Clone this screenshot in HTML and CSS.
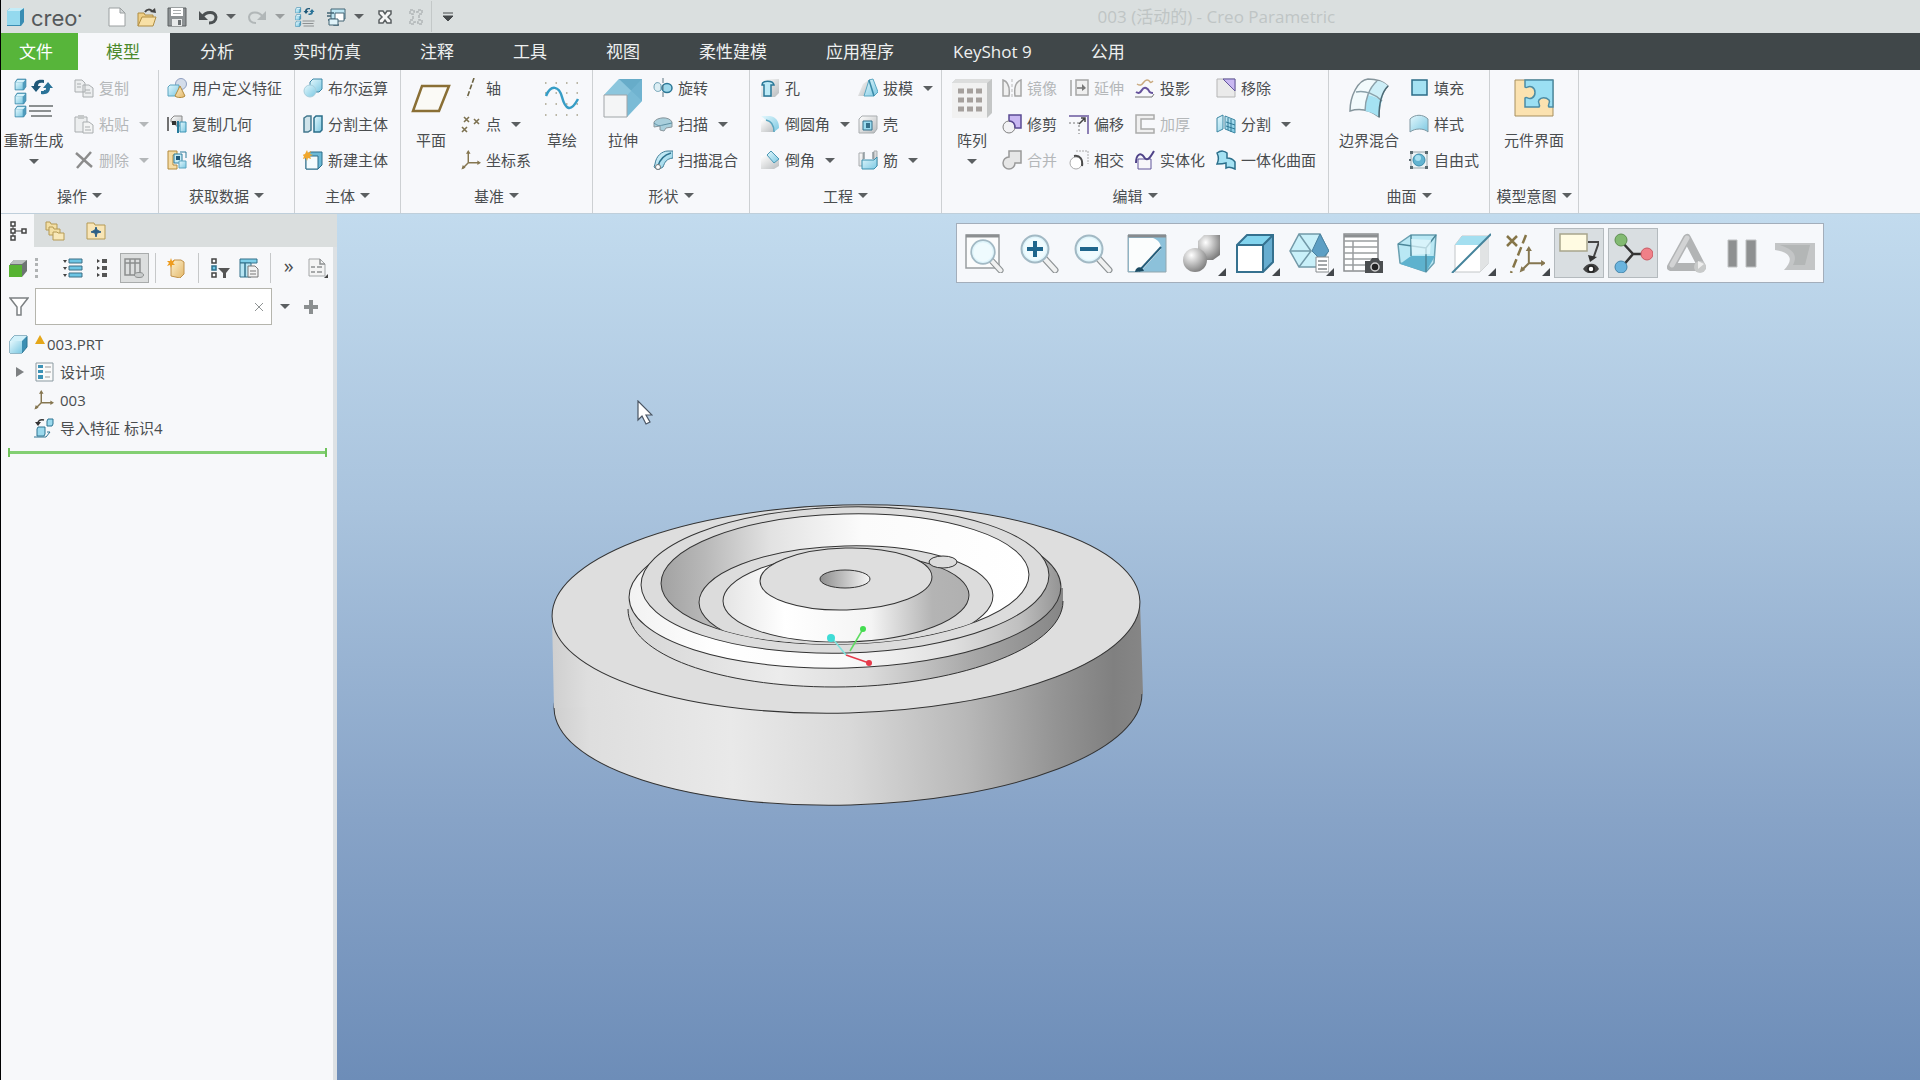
FILE: index.html
```html
<!DOCTYPE html>
<html lang="zh-CN">
<head>
    <meta charset="UTF-8">
    <meta name="viewport" content="width=device-width, initial-scale=1.0">
    <title>003 (活动的) - Creo Parametric</title>
    <link rel="stylesheet" href="styles.css">
</head>
<body>
<!-- Shared icon shapes and gradients -->
<svg class="defs" width="0" height="0" aria-hidden="true">
  <defs>
    <linearGradient id="ice" x1="0" y1="0" x2="1" y2="1">
      <stop offset="0" stop-color="#e4f8fd"/><stop offset="1" stop-color="#7cc8e2"/>
    </linearGradient>
    <linearGradient id="stone" x1="0" y1="0" x2="1" y2="1">
      <stop offset="0" stop-color="#ffffff"/><stop offset="1" stop-color="#b9bcbe"/>
    </linearGradient>
    <linearGradient id="sand" x1="0" y1="0" x2="1" y2="1">
      <stop offset="0" stop-color="#fdf1cf"/><stop offset="1" stop-color="#e3b768"/>
    </linearGradient>
    <radialGradient id="ball" cx="0.35" cy="0.3" r="0.75">
      <stop offset="0" stop-color="#ffffff"/><stop offset="1" stop-color="#7d7d7d"/>
    </radialGradient>
    <symbol id="cube" viewBox="0 0 12 12">
      <path d="M1 4 3 1h8v7l-2 3H1z" fill="#4f9cbd"/>
      <path d="M1 4h7v7H1z" fill="url(#ice)"/>
      <path d="M1.500 4 3.200 1.500H10.500L8.500 4z" fill="#d8f3fb"/>
      <path d="M1 4 3 1h8v7l-2 3H1z" fill="none" stroke="#3b87a8" stroke-width="0.700"/>
    </symbol>
    <symbol id="csys" viewBox="0 0 22 22">
      <path d="M8 2v12h12M8 14l-6 6" fill="none" stroke="#857650" stroke-width="1.600"/>
      <path d="M8 0 5.500 4h5zM22 14l-4-2.500v5zM0.500 21.500l1.500-5 3 3z" fill="#857650"/>
    </symbol>
    <symbol id="regen" viewBox="0 0 40 40">
      <use href="#cube" x="0" y="0" width="13" height="13"/>
      <use href="#cube" x="0" y="14" width="13" height="13"/>
      <use href="#cube" x="0" y="27" width="13" height="13"/>
      <path d="M30 2c-7-1-10 2-10 6h-3l5 6 5-6h-3c0-3 2-4 6-3z" fill="#1f5878"/>
      <path d="M27 16c6 1 9-2 9-6h3l-5-6-5 6h3c0 3-2 3-5 3z" fill="#2a7398"/>
      <path d="M15 28h24M15 33h22M17 38h21" stroke="#8c9091" stroke-width="2"/>
    </symbol>
    <symbol id="glass" viewBox="0 0 40 40">
      <path d="m25 25 11 12" stroke="#8f9496" stroke-width="7" stroke-linecap="round"/>
      <path d="m25 25 11 12" stroke="#f0f1f1" stroke-width="4.500" stroke-linecap="round"/>
      <circle cx="16" cy="16" r="13.500" fill="#dff5fb" stroke="#a2b9c4" stroke-width="2"/>
      <circle cx="16" cy="16" r="11" fill="#effbfe"/>
    </symbol>
    <symbol id="bigcube" viewBox="0 0 40 40">
      <path d="M2 12 12 2h26v27L28 39H2z" fill="#fff"/>
      <path d="M2 12 12 2h26L28 12z" fill="#83d4ee"/>
      <path d="M28 12 38 2v27L28 39z" fill="#67add0"/>
      <path d="M2 12 12 2h26v27L28 39H2zM2 12h26v27M28 12 38 2" fill="none" stroke="#35718f" stroke-width="2"/>
    </symbol>
  </defs>
</svg>

<!-- Title bar with quick access tools -->
<header class="titlebar">
  <div class="quick">
    <svg class="app" viewBox="0 0 20 20"><path d="M2 4 5 1h14v14l-3 4H2z" fill="#3a8db3"/><path d="M2 4h13v14H2z" fill="#94d9ee"/><path d="M2 4 5 1h14l-4 3z" fill="#c5ecf7"/></svg>
    <span class="brand">creo<sup>•</sup></span>
    <button class="qbtn" aria-label="新建"><svg viewBox="0 0 20 20"><path d="M2 1h11l5 5v13H2z" fill="#fff" stroke="#9a9fa0"/><path d="M13 1v5h5z" fill="#d5d9da" stroke="#9a9fa0"/></svg></button>
    <button class="qbtn" aria-label="打开"><svg viewBox="0 0 20 20"><path d="M1 19V6h6l1 2h8v4" fill="#efcf86" stroke="#b08d42"/><path d="m1 19 4-9h14l-3 9z" fill="#f8e0a6" stroke="#b08d42"/><path d="M8 5c2-3 5-3 7-1" fill="none" stroke="#444" stroke-width="2"/><path d="m13 5 6 1-1-5z" fill="#444"/></svg></button>
    <button class="qbtn" aria-label="保存"><svg viewBox="0 0 20 20"><path d="M1 1h18v18H1z" fill="#8d9294" stroke="#5c6163"/><path d="M4 1h12v8H4z" fill="#fff"/><path d="M5 12h10v7H5z" fill="#e8eaea"/><path d="M6 3.500h8M6 6.500h8" stroke="#a9adae"/><path d="M11 13h3v5h-3z" fill="#6b7072"/></svg></button>
    <button class="qbtn undo" aria-label="撤消"><svg viewBox="0 0 20 20"><path d="M4 10c4-6 13-6 14 0 0 4-3 6-7 6" fill="none" stroke="#4b5052" stroke-width="3"/><path d="M1 4v9h9z" fill="#4b5052"/></svg><i class="caret"></i></button>
    <button class="qbtn undo faint" aria-label="重做"><svg viewBox="0 0 20 20"><path d="M16 10C12 4 3 4 2 10c0 4 3 6 7 6" fill="none" stroke="#8a9092" stroke-width="2"/><path d="M19 4v9h-9z" fill="#8a9092"/></svg><i class="caret"></i></button>
    <button class="qbtn" aria-label="重新生成模型"><svg viewBox="0 0 40 40"><use href="#regen"/></svg></button>
    <button class="qbtn undo" aria-label="窗口"><svg viewBox="0 0 20 20"><path d="M5 2h14v10H5z" fill="#bfe6f3" stroke="#426474"/><path d="M9 6h9v8H9z" fill="#fff" stroke="#426474"/><path d="M1 6h7M1 9h4M2 13h6v5h5" fill="none" stroke="#426474" stroke-width="1.500"/><path d="M3 12h9v6H3z" fill="#dff3f9" stroke="#426474"/></svg><i class="caret"></i></button>
    <button class="qbtn last" aria-label="关闭"><svg viewBox="0 0 20 20"><path d="M4 4h4l2 3 2-3h4v3l-3 3 3 3v3h-4l-2-3-2 3H4v-3l3-3-3-3z" fill="#f6f6f6" stroke="#5a5f61" stroke-width="1.500"/></svg></button>
    <button class="qbtn faint" aria-label="关闭其他"><svg viewBox="0 0 20 20"><path d="M4 3h4v2h4V3h4v4h-3v6h3v4h-4v-2H8v2H4v-4h3V7H4z" fill="none" stroke="#8a9092" stroke-width="1.500" stroke-dasharray="3 1"/></svg></button>
    <button class="more" aria-label="自定义快速访问工具栏"><svg viewBox="0 0 10 10"><path d="M0 1h10M0 4h10L5 9z" fill="#44484a" stroke="#44484a"/></svg></button>
  </div>
  <h1 class="doc-title">003 (活动的) - Creo Parametric</h1>
</header>

<nav class="tabs">
  <a class="tab file" href="#">文件</a>
  <a class="tab active" href="#">模型</a>
  <a class="tab" href="#">分析</a>
  <a class="tab" href="#">实时仿真</a>
  <a class="tab" href="#">注释</a>
  <a class="tab" href="#">工具</a>
  <a class="tab" href="#">视图</a>
  <a class="tab" href="#">柔性建模</a>
  <a class="tab" href="#">应用程序</a>
  <a class="tab" href="#">KeyShot 9</a>
  <a class="tab" href="#">公用</a>
</nav>

<!-- Ribbon -->
<section class="ribbon">
  <div class="group g-ops">
    <div class="tools">
      <button class="big"><svg viewBox="0 0 40 40"><use href="#regen"/></svg><span>重新生成</span><i class="caret"></i></button>
      <div class="col">
        <button class="cmd" disabled><svg viewBox="0 0 20 20"><path d="M1 2h7l3 3v9H1zM9 7h6l4 3v9H9z" fill="#eceeef" stroke="#a9adaf"/><path d="M3 6h4M3 9h4M11 12h5M11 15h6" stroke="#a9adaf"/></svg>复制</button>
        <button class="cmd" disabled><svg viewBox="0 0 20 20"><path d="M1 3h12v15H1z" fill="#eceeef" stroke="#a9adaf"/><path d="M4 1h6v4H4z" fill="#c6c9ca"/><path d="M9 8h6l4 3v8H9z" fill="#f3f4f4" stroke="#a9adaf"/><path d="M11 13h5M11 16h6" stroke="#a9adaf"/></svg>粘贴<i class="caret"></i></button>
        <button class="cmd" disabled><svg viewBox="0 0 20 20"><path d="m2 3 16 14M17 2 3 18" stroke="#8c8c8c" stroke-width="2.500"/></svg>删除<i class="caret"></i></button>
      </div>
    </div>
    <button class="group-label">操作<i class="caret"></i></button>
  </div>

  <div class="group g-data">
    <div class="tools">
      <div class="col">
        <button class="cmd"><svg viewBox="0 0 20 20"><circle cx="14" cy="6" r="5.500" fill="#d3dcea" stroke="#8f9fc0"/><path d="M1 9 3 7h9v9l-2 2H1z" fill="url(#ice)" stroke="#5ba4c0"/><path d="m13 8-5 10c2 2 8 2 10 0z" fill="url(#sand)" stroke="#b28a3c"/></svg>用户定义特征</button>
        <button class="cmd"><svg viewBox="0 0 20 20"><path d="M1 3v14" stroke="#444" stroke-width="1.500"/><path d="M4 5 7 2h8v10H9V8H4z" fill="url(#stone)" stroke="#888"/><path d="M5 7h4v4H5z" fill="#333"/><path d="M13 8h6v10h-6z" fill="url(#ice)" stroke="#3d94b5"/><path d="M11 7v12" stroke="#277b9c" stroke-width="2"/></svg>复制几何</button>
        <button class="cmd"><svg viewBox="0 0 20 20"><path d="M1 1h9v4H6v10h4v4H1z" fill="#f6dca5" stroke="#b28a3c"/><path d="M7 4h8v9H7z" fill="#c6ecf7" stroke="#2e7d9c"/><path d="M9 6h4v4H9z" fill="#1f5878"/><path d="M12 11h7v7h-7z" fill="url(#ice)" stroke="#5ba4c0"/><path d="M13 2h6v6" fill="none" stroke="#2e7d9c"/></svg>收缩包络</button>
      </div>
    </div>
    <button class="group-label">获取数据<i class="caret"></i></button>
  </div>

  <div class="group g-body">
    <div class="tools">
      <div class="col">
        <button class="cmd"><svg viewBox="0 0 20 20"><path d="M7 4 10 1h9v10l-3 3H7z" fill="url(#ice)" stroke="#3d87a6"/><circle cx="7" cy="13" r="6" fill="url(#ice)" stroke="#a9cfdd"/></svg>布尔运算</button>
        <button class="cmd"><svg viewBox="0 0 20 20"><path d="m1 4 3-2h4v14l-3 2H1z" fill="#cfe3ea" stroke="#44788e" stroke-width="1.500"/><path d="m11 4 2-2h6v14l-2 2h-6z" fill="url(#ice)" stroke="#2a6d89" stroke-width="1.500"/></svg>分割主体</button>
        <button class="cmd"><svg viewBox="0 0 20 20"><path d="m3 5 4-3h12v13l-4 4H3z" fill="#6cb9d6" stroke="#2a6d89"/><path d="M3 6h12v13H3z" fill="#f4fbfd" stroke="#2a6d89"/><path d="m4 0 1 3 3-2-1 3 3 1-3 1 1 3-3-1-1 3-1-3-3 1 1-3-2-1 3-1z" fill="#f0a72c"/></svg>新建主体</button>
      </div>
    </div>
    <button class="group-label">主体<i class="caret"></i></button>
  </div>

  <div class="group g-datum">
    <div class="tools">
      <button class="big"><svg viewBox="0 0 40 40"><path d="M11 8h27L28 33H2z" fill="#fbfaf6" stroke="#8a6f35" stroke-width="2.500"/></svg><span>平面</span></button>
      <div class="col">
        <button class="cmd"><svg viewBox="0 0 20 20"><path d="M13 0 6 20" stroke="#6c6342" stroke-width="1.600" stroke-dasharray="5 2"/></svg>轴</button>
        <button class="cmd"><svg viewBox="0 0 20 20"><path d="m3 3 5 5m0-5L3 8M13 5l5 5m0-5-5 5M1 13l5 5m0-5-5 5" stroke="#7c7150" stroke-width="1.600"/></svg>点<i class="caret"></i></button>
        <button class="cmd"><svg viewBox="0 0 22 22"><use href="#csys"/></svg>坐标系</button>
      </div>
      <button class="big"><svg viewBox="0 0 40 40"><path d="M3 5h34M3 15h34M3 26h34M3 37h34" stroke="#a7a08a" stroke-width="1.500" stroke-dasharray="1.500 9"/><path d="M4 18C9 6 17 8 20 19s8 17 16 2" fill="none" stroke="#379dc6" stroke-width="2.500"/></svg><span>草绘</span></button>
    </div>
    <button class="group-label">基准<i class="caret"></i></button>
  </div>

  <div class="group g-shape">
    <div class="tools">
      <button class="big"><svg viewBox="0 0 40 40"><path d="M1 17 16 1h23v22L24 39z" fill="#a7dcee"/><path d="M16 1h23L24 17H1z" fill="#8cc6dd"/><path d="m16 1 23 22V1z" fill="#4e9bbd" opacity="0.600"/><path d="M24 17 39 1v22L24 39z" fill="#6fb3cf" opacity="0.800"/><path d="M1 17h23v22H1z" fill="#f4f5f6" stroke="#a0a5a8"/></svg><span>拉伸</span></button>
      <div class="col">
        <button class="cmd"><svg viewBox="0 0 20 20"><path d="M1 9c0-6 6-5 7-2v5c-3 3-7 1-7-3z" fill="#dceef4" stroke="#6b9fb3"/><ellipse cx="14" cy="10" rx="5" ry="4.500" fill="#9ed8eb" stroke="#2c7796" stroke-width="1.500"/><path d="M10 0v20" stroke="#5c7782" stroke-dasharray="5 2"/></svg>旋转</button>
        <button class="cmd"><svg viewBox="0 0 20 20"><path d="M1 8c3-5 15-6 18 0v5l-6 1-2 3-4-1v-4l-6 1z" fill="#a9cfdc" stroke="#8a979d"/><path d="M1 9c4 3 5 3 9 2l9-2" fill="none" stroke="#5d8fa3"/></svg>扫描<i class="caret"></i></button>
        <button class="cmd"><svg viewBox="0 0 20 20"><path d="M2 14C3 6 9 1 15 1h5v7c-7 1-8 4-10 9l-5 3-4-3z" fill="url(#ice)" stroke="#427f99"/><path d="M5 16C7 9 11 5 18 3" fill="none" stroke="#2d728f" stroke-width="1.500"/><circle cx="5" cy="17" r="2.500" fill="#fff" stroke="#777"/></svg>扫描混合</button>
      </div>
    </div>
    <button class="group-label">形状<i class="caret"></i></button>
  </div>

  <div class="group g-eng">
    <div class="tools">
      <div class="col">
        <button class="cmd"><svg viewBox="0 0 20 20"><path d="M1 5 5 1h14v14l-4 4H1z" fill="url(#stone)"/><path d="M4 18V7H2c0-5 11-5 12 0h-3v11z" fill="#bdeaf6" stroke="#2a7898" stroke-width="1.500"/></svg>孔</button>
        <button class="cmd"><svg viewBox="0 0 20 20"><path d="M1 6h8c5 1 6 5 6 12H1z" fill="url(#stone)"/><path d="M1 2h9c6 1 9 5 9 12l-5 4C14 10 11 7 6 6z" fill="url(#ice)"/><path d="M14 18c0-8-3-11-8-12" fill="none" stroke="#5aa5c0" stroke-width="1.500"/></svg>倒圆角<i class="caret"></i></button>
        <button class="cmd"><svg viewBox="0 0 20 20"><path d="M1 6h7l6 6v7H1zM14 12l5-3v7l-5 3z" fill="url(#stone)"/><path d="m7 5 4-4 8 8-5 4z" fill="url(#ice)" stroke="#4c98b4"/></svg>倒角<i class="caret"></i></button>
      </div>
      <div class="col">
        <button class="cmd"><svg viewBox="0 0 20 20"><path d="M0 18 5 6l7-5v17z" fill="url(#stone)"/><path d="m11 2 4-1 5 13-4 4H6z" fill="url(#ice)" stroke="#5ba7c2"/><path d="m11 2 5 16" stroke="#398aa8" stroke-width="1.500"/></svg>拔模<i class="caret"></i></button>
        <button class="cmd"><svg viewBox="0 0 20 20"><path d="m1 5 3-3h15v13l-3 4H1z" fill="url(#stone)" stroke="#a9adaf"/><path d="M5 7h9v9H5z" fill="#9bdcf0" stroke="#34718b"/><path d="M8 9h4v5H8z" fill="#34718b"/></svg>壳</button>
        <button class="cmd"><svg viewBox="0 0 20 20"><path d="M1 7V3h4v13H1zM16 1h3v15l-3 3z" fill="url(#stone)" stroke="#a9adaf"/><path d="M4 10h12l3-3v9l-3 3H4z" fill="url(#ice)" stroke="#3a8fae"/><path d="M6 2v7M15 2v7" stroke="#5d6a70"/></svg>筋<i class="caret"></i></button>
      </div>
    </div>
    <button class="group-label">工程<i class="caret"></i></button>
  </div>

  <div class="group g-edit">
    <div class="tools">
      <button class="big"><svg viewBox="0 0 40 40"><path d="M0 5 4 1h36v34l-5 5H0z" fill="#c4c6c6"/><path d="M0 5 4 1h36l-5 4z" fill="#dcdddd"/><path d="M0 5h35v35H0z" fill="#f1f1f1"/><path d="M6 13h24M6 22h24M6 31h24" stroke="#a5a09d" stroke-width="5" stroke-dasharray="6 3"/></svg><span>阵列</span><i class="caret"></i></button>
      <div class="col">
        <button class="cmd" disabled><svg viewBox="0 0 20 20"><path d="M1 2c6 2 7 8 6 16H1zM19 2c-6 2-7 8-6 16h6z" fill="#f0f0f0" stroke="#a5a5a5" stroke-width="1.500"/><path d="M10 1v18" stroke="#bbb" stroke-dasharray="3 2"/></svg>镜像</button>
        <button class="cmd"><svg viewBox="0 0 20 20"><path d="M7 1h12v13H7z" fill="#c9b8f2" stroke="#5a4a93" stroke-width="1.500"/><circle cx="7" cy="13" r="6" fill="#f2f2f4" stroke="#808080"/><path d="M7 7c4 0 6 3 6 7" fill="none" stroke="#5a4a93" stroke-width="1.500"/></svg>修剪</button>
        <button class="cmd" disabled><svg viewBox="0 0 20 20"><path d="M7 1h12v12h-6a6 6 0 1 1-6-6z" fill="#e6e6e6" stroke="#999" stroke-width="1.500"/></svg>合并</button>
      </div>
      <div class="col">
        <button class="cmd" disabled><svg viewBox="0 0 20 20"><path d="M2 2v16M7 2h12v15H7z" fill="#f0f0f0" stroke="#a5a5a5" stroke-width="1.500"/><path d="M8 10h6" stroke="#777" stroke-width="1.500"/><path d="m13 6 4 4-4 3z" fill="#777"/></svg>延伸</button>
        <button class="cmd"><svg viewBox="0 0 20 20"><path d="M0 2h19v18" fill="none" stroke="#8d80b5" stroke-width="2"/><path d="M0 9h10v11" fill="none" stroke="#777" stroke-dasharray="2 2"/><path d="m10 10 6-6M12 4h4v4" fill="none" stroke="#444" stroke-width="1.500"/></svg>偏移</button>
        <button class="cmd"><svg viewBox="0 0 20 20"><path d="M7 1h12v13" fill="none" stroke="#aaa" stroke-dasharray="2 1"/><circle cx="7" cy="13" r="6" fill="#fff" stroke="#aaa"/><path d="M5 6c6-1 9 3 8 10" fill="none" stroke="#4b4b4b" stroke-width="2"/></svg>相交</button>
      </div>
      <div class="col">
        <button class="cmd"><svg viewBox="0 0 20 20"><path d="M2 6c6 4 6-4 10-4s2 5 6 1" fill="none" stroke="#c9a97e" stroke-width="1.500"/><path d="M1 14c6 4 5-6 10-4s1 5 7 5" fill="none" stroke="#65529c" stroke-width="2"/><path d="M0 19h17l2-3" fill="none" stroke="#777"/></svg>投影</button>
        <button class="cmd" disabled><svg viewBox="0 0 20 20"><path d="M1 1h18v4H6v10h13v4H1z" fill="#f0f0f0" stroke="#aaa" stroke-width="1.500"/></svg>加厚</button>
        <button class="cmd"><svg viewBox="0 0 20 20"><path d="M3 9h13v10H3z" fill="#f7f7fa" stroke="#61559a"/><path d="M1 13c0-9 5-11 8-6s6 1 10-6" fill="none" stroke="#4f4388" stroke-width="2"/></svg>实体化</button>
      </div>
      <div class="col">
        <button class="cmd"><svg viewBox="0 0 20 20"><path d="M1 1h18v18H1z" fill="#eaeaea" stroke="#b5b5b5"/><path d="M7 1h12v12z" fill="#c9b8f2" stroke="#61559a"/></svg>移除</button>
        <button class="cmd"><svg viewBox="0 0 20 20"><path d="m1 4 6-3v14l-6 3zM9 2l10 4v13L9 15z" fill="url(#ice)" stroke="#3c86a2"/><path d="M12 4v12M15 5v13M10 8l9 3M10 12l9 3" stroke="#2f7996"/></svg>分割<i class="caret"></i></button>
        <button class="cmd"><svg viewBox="0 0 20 20"><path d="M1 3c4-3 8-2 10 0v5c4 0 6 1 8 4v7c-4-2-7-2-9-1v-5c-3 1-7 1-9 1 2-4 2-7 0-11z" fill="#a5e2f3" stroke="#2b6f8b" stroke-width="1.500"/></svg>一体化曲面</button>
      </div>
    </div>
    <button class="group-label">编辑<i class="caret"></i></button>
  </div>

  <div class="group g-surf">
    <div class="tools">
      <button class="big"><svg viewBox="0 0 40 40"><path d="M1 33C1 18 9 2 19 1c8 0 15 2 20 7-6 6-9 17-9 31-9-7-19-9-29-6z" fill="#f2fafc" stroke="#85959c" stroke-width="1.500"/><path d="M19 17c6 1 10 3 14 6-2 5-3 10-3 16-4-3-8-5-14-6 0-5 1-11 3-16z" fill="#a5e2f3"/><path d="M28 3c5 0 8 2 11 5-3 3-5 8-6 15-4-3-8-5-14-6 2-6 5-11 9-14z" fill="#cdeef7"/><path d="M28 3C20 10 16 22 16 33M7 14c9-2 19 2 26 9" fill="none" stroke="#8aa0a9" stroke-width="1.500"/><path d="M39 8c-6 6-9 17-9 31" fill="none" stroke="#4c6873" stroke-width="1.500"/></svg><span>边界混合</span></button>
      <div class="col">
        <button class="cmd"><svg viewBox="0 0 20 20"><path d="M3 2h15v15H3z" fill="#a5e2f3" stroke="#2c6c88" stroke-width="1.500"/></svg>填充</button>
        <button class="cmd"><svg viewBox="0 0 20 20"><path d="M1 5c5-5 13-5 18 0v13c-4-4-13-4-18 0z" fill="url(#ice)" stroke="#8199a3"/></svg>样式</button>
        <button class="cmd"><svg viewBox="0 0 20 20"><path d="M2 2h16v16H2z" fill="#eef3f5" stroke="#98a4a9"/><circle cx="10" cy="10" r="6" fill="#63b4d1" stroke="#3b8cab"/><circle cx="9" cy="8" r="3" fill="#a9e0f0"/><path d="M1 1h3v3H1zM16 1h3v3h-3zM1 16h3v3H1zM16 16h3v3h-3zM0 9h2v2H0z" fill="#5c6a70"/></svg>自由式</button>
      </div>
    </div>
    <button class="group-label">曲面<i class="caret"></i></button>
  </div>

  <div class="group g-intent">
    <div class="tools">
      <button class="big"><svg viewBox="0 0 40 40"><path d="M1 2h38v36H1z" fill="#fbe2b0" stroke="#a68f5e"/><path d="M11 2h28v27h-4c-2-3 2-4 0-7-3-3-8-3-10 0-2 3 2 4 0 7H11v-9c2-2 3 2 7 0 4-2 4-9 0-11-4-2-5 2-7 0z" fill="#9bdff3" stroke="#4c8ca5" stroke-width="1.500"/></svg><span>元件界面</span></button>
    </div>
    <button class="group-label">模型意图<i class="caret"></i></button>
  </div>
</section>

<main class="work">
  <!-- Model tree -->
  <aside class="panel">
    <div class="panel-tabs">
      <button class="ptab on" aria-label="模型树"><svg viewBox="0 0 20 20"><path d="M3 1h4v4H3zM3 8h4v4H3zM3 15h4v4H3zM14 8h4v4h-4z" fill="none" stroke="#444" stroke-width="1.500"/><path d="M5 5v3M5 12v3M7 10h7" stroke="#444"/></svg></button>
      <button class="ptab" aria-label="文件夹浏览器"><svg viewBox="0 0 20 20"><path d="M1 1h4l1 2h6v6H1z" fill="#f3dfa4" stroke="#b59a55"/><path d="M4 6h4l1 2h6v6H4z" fill="#f3dfa4" stroke="#b59a55"/><path d="M8 11h4l1 1h6v7H8z" fill="#f8e8b9" stroke="#b59a55"/></svg></button>
      <button class="ptab" aria-label="收藏夹"><svg viewBox="0 0 20 20"><path d="M1 2h7l1 2h10v14H1z" fill="#f8e5b6" stroke="#b59a55"/><path d="m10 6 1 3 4 2-4 1-1 4-1-4-4-1 4-2z" fill="#2d5f86" stroke="#2d5f86"/></svg></button>
    </div>
    <div class="panel-tools">
      <button class="pt" aria-label="模型"><svg viewBox="0 0 20 20"><path d="m2 6 4-4h13v11l-5 6H2z" fill="#6d7472"/><path d="m2 6 4-4h13l-5 4z" fill="#b9c0bd"/><path d="M1 7h13v12H1z" fill="#57b332"/></svg></button>
      <i class="grip"></i>
      <button class="pt" aria-label="全部展开"><svg viewBox="0 0 20 20"><path d="M6 1h13v4H6zM6 8h13v4H6zM6 15h13v4H6z" fill="#6cc5e4" stroke="#3c6f85"/><path d="M0 2h4L2 5zM0 9h4l-2 3zM0 16h4l-2 3z" fill="#444"/></svg></button>
      <button class="pt" aria-label="全部折叠"><svg viewBox="0 0 20 20"><path d="M9 1h5v4H9zM9 8h5v4H9zM9 15h5v4H9z" fill="#555"/><path d="m4 1 3 2-3 2zM4 8l3 2-3 2zM4 15l3 2-3 2z" fill="#444"/></svg></button>
      <button class="pt pressed" aria-label="树列"><svg viewBox="0 0 20 20"><path d="M1 1h15v16H1zM1 5h15M6 1v16M11 1v16" fill="none" stroke="#8c8f8f" stroke-width="1.500"/><ellipse cx="15" cy="17" rx="4.500" ry="2.500" fill="#c9cccc" stroke="#8c8f8f"/></svg></button>
      <i class="bar"></i>
      <button class="pt" aria-label="新建主体"><svg viewBox="0 0 20 20"><path d="m4 6 3-4h7l3 2v12l-4 4-9-2z" fill="url(#sand)" stroke="#c0914a"/><path d="m4 0 1 3 3-1-2 3 2 2-3 0-1 3-1-3-3 1 2-3-2-2 3 0z" fill="#ee9c1e"/></svg></button>
      <i class="bar"></i>
      <button class="pt" aria-label="树过滤器"><svg viewBox="0 0 20 20"><path d="M2 1h4v4H2zM2 15h4v4H2z" fill="#fff" stroke="#444" stroke-width="1.500"/><path d="M2 8h4v4H2z" fill="#6cc5e4" stroke="#2f6f8a" stroke-width="1.500"/><path d="M8 10h12l-4 5v5h-3v-5z" fill="#555"/></svg></button>
      <button class="pt" aria-label="树列设置"><svg viewBox="0 0 20 20"><path d="M1 1h17v4H1z" fill="#7fcfe9" stroke="#33708a"/><path d="M1 5h5v14H1zM6 5h6v14H6z" fill="#b7e5f3" stroke="#33708a"/><path d="M9 8h7l3 3v8H9z" fill="#f2f2f2" stroke="#777"/><path d="M11 13h6M11 16h6" stroke="#777"/></svg></button>
      <i class="bar"></i>
      <button class="pt chev" aria-label="更多">»</button>
      <button class="pt" aria-label="设置"><svg viewBox="0 0 20 20"><path d="M1 1h11l5 5v12H1z" fill="#f4f4f4" stroke="#a4a7a8"/><path d="M12 1v5h5M3 9h4M9 9h5M3 14h4M9 14h5" fill="none" stroke="#8d9091" stroke-width="1.500"/><path d="M20 16v4h-4z" fill="#444"/></svg></button>
    </div>
    <div class="search">
      <svg viewBox="0 0 20 20"><path d="M1 1h18l-7 9v8H8v-8z" fill="#fff" stroke="#7c8082" stroke-width="1.500"/></svg>
      <div class="search-box">
        <input type="text" aria-label="搜索">
        <button class="clear" aria-label="清除"><svg viewBox="0 0 10 10"><path d="m1 1 8 8M9 1 1 9" stroke="#8f9394"/></svg></button>
      </div>
      <button class="opt" aria-label="选项"><i class="caret"></i></button>
      <button class="opt" aria-label="添加"><svg viewBox="0 0 14 14"><path d="M7 0v14M0 7h14" stroke="#8b8f90" stroke-width="4"/></svg></button>
    </div>
    <ul class="tree">
      <li class="root"><svg viewBox="0 0 20 20"><path d="m2 7 4-5h13v11l-5 6H2z" fill="#3d8fb3" stroke="#2c7492"/><path d="M2 7h12v12H2z" fill="url(#ice)"/><path d="m2 7 4-5h13l-5 5z" fill="#d2f1fa"/></svg><svg class="warn" viewBox="0 0 10 10"><path d="m5 0 5 9H0z" fill="#e5a719"/></svg>003.PRT</li>
      <li class="branch"><i class="twist"></i><svg viewBox="0 0 20 20"><path d="M2 1h17v18H2z" fill="#fafafa" stroke="#8b9aa1"/><path d="M4 3h5v3H4zM4 8h5v3H4zM4 13h5v4H4z" fill="#3c92b6"/><path d="M11 5h6M11 10h6M11 15h5" stroke="#999"/></svg>设计项</li>
      <li><svg viewBox="0 0 22 22"><use href="#csys"/></svg>003</li>
      <li><svg viewBox="0 0 20 20"><path d="m3 11 1-2h7v7l-1 2H3z" fill="#9bd9ed" stroke="#2c7492"/><path d="m13 3 1-2h5v5l-1 2h-5z" fill="#9bd9ed" stroke="#2c7492"/><path d="M10 2C6 1 4 3 4 5" fill="none" stroke="#333" stroke-width="1.500"/><path d="M1 4h6L4 8z" fill="#333"/><path d="M0 19h12l4-5h-3" fill="none" stroke="#2c7492"/></svg>导入特征 标识4</li>
    </ul>
    <div class="insert-line"></div>
  </aside>

  <!-- Graphics window -->
  <section class="canvas">
    <div class="viewbar">
      <button class="vb" aria-label="重新调整"><svg viewBox="0 0 40 40"><path d="M1 2h33v33H1z" fill="#fbfcfc" stroke="#999da0" stroke-width="1.500"/><path d="M1 3h33" stroke="#8c8f91" stroke-width="3"/><use href="#glass" x="4" y="5" width="35" height="35"/></svg></button>
      <button class="vb" aria-label="放大"><svg viewBox="0 0 40 40"><use href="#glass"/><path d="M16 8v16M8 16h16" stroke="#1e668c" stroke-width="4"/></svg></button>
      <button class="vb" aria-label="缩小"><svg viewBox="0 0 40 40"><use href="#glass"/><path d="M7 16h18" stroke="#1e668c" stroke-width="4"/></svg></button>
      <button class="vb" aria-label="重画"><svg viewBox="0 0 40 40"><path d="M1 2h38v37H1z" fill="#8cc1da"/><path d="M1 2h38v37H1z" fill="none" stroke="#92a6ae"/><path d="M2 5h24c5 2 8 5 8 11L14 38H2z" fill="#fbfdfd"/><path d="M34 14 12 38" stroke="#255d7a" stroke-width="2"/><path d="M8 39c1-6 7-6 9-1z" fill="#1b4b63"/><path d="M1 3h38" stroke="#878b8e" stroke-width="3"/></svg></button>
      <button class="vb" aria-label="渲染"><svg viewBox="0 0 40 40"><path d="m17 8 6-6h16v20l-7 5H17z" fill="url(#ball)"/><circle cx="14" cy="27" r="12" fill="url(#ball)"/></svg><i class="corner"></i></button>
      <button class="vb" aria-label="显示样式"><svg viewBox="0 0 40 40"><use href="#bigcube"/></svg><i class="corner"></i></button>
      <button class="vb" aria-label="已保存方向"><svg viewBox="0 0 40 40"><path d="M10 1h21l8 17-8 16H10L1 18z" fill="#c9f0f9" stroke="#7299a8" stroke-width="1.500"/><path d="M1 18h21M10 1l12 17-12 16" fill="none" stroke="#7299a8" stroke-width="1.500"/><path d="m31 1 9 17-8 9-9-9z" fill="#5d9fc4" stroke="#4a82a0"/><path d="M27 24h13v15H27z" fill="#fff" stroke="#858a8d"/><path d="M29 28h9M29 32h9M29 36h9" stroke="#858a8d" stroke-width="1.500"/></svg><i class="corner"></i></button>
      <button class="vb" aria-label="视图管理器"><svg viewBox="0 0 40 40"><path d="M1 1h34v37H1z" fill="#fff" stroke="#8c8f91" stroke-width="1.500"/><path d="M1 3h34" stroke="#8c8f91" stroke-width="3"/><path d="M1 8h34M1 14h34M1 20h34M1 26h34M1 32h34M10 8v30" stroke="#9b9ea0" stroke-width="1.500"/><path d="M22 28h5l2-3h6l2 3h3v12H22z" fill="#4b4e50"/><circle cx="32" cy="34" r="4" fill="#222" stroke="#d0d0d0" stroke-width="1.500"/></svg></button>
      <button class="vb" aria-label="透视图"><svg viewBox="0 0 40 40"><path d="m1 11 13-9h25l-2 28-8 9-26-9z" fill="#b9e8f4" stroke="#6aa0b1" stroke-width="1.500"/><path d="m3 31 11-8h24l-9 16z" fill="#5eb2ce"/><path d="m1 11 28 4L39 2M29 15v24M14 2v21" fill="none" stroke="#4c8799" stroke-width="1.500"/><path d="m14 6 20 1-1 14-18 1z" fill="#e5f8fc" opacity="0.700"/></svg></button>
      <button class="vb" aria-label="截面"><svg viewBox="0 0 40 40"><path d="m4 12 7-9h26v28l-8 8H4z" fill="#fff" stroke="#c2c6c8"/><path d="m4 12 7-9h26l-8 9z" fill="#a4dff0"/><path d="m29 12 8-9v28l-8 8z" fill="#e1e3e4"/><path d="M40 1 1 40" stroke="#45839b" stroke-width="2"/></svg><i class="corner"></i></button>
      <button class="vb" aria-label="基准显示过滤器"><svg viewBox="0 0 40 40"><path d="m2 3 10 10M12 3 2 13" stroke="#857548" stroke-width="2.500"/><path d="M21 2 6 40" stroke="#857548" stroke-width="2.500" stroke-dasharray="9 4"/><use href="#csys" x="14" y="13" width="27" height="27"/></svg><i class="corner"></i></button>
      <button class="vb pressed" aria-label="注释显示"><svg viewBox="0 0 40 40"><path d="M1 1h27v17H1z" fill="#fffbe2" stroke="#a8a58c" stroke-width="1.500"/><path d="M29 9h11l-6 17" fill="none" stroke="#444" stroke-width="2"/><path d="m29 22 9 2-7 5z" fill="#333"/><path d="M24 36c4-7 13-7 16 0-4 6-12 6-16 0z" fill="#444"/><circle cx="32" cy="36" r="3" fill="#fff" stroke="#222" stroke-width="1.500"/></svg></button>
      <button class="vb pressed" aria-label="旋转中心"><svg viewBox="0 0 40 40"><path d="m8 8 12 13L8 35M20 21h13" fill="none" stroke="#333" stroke-width="2.500"/><circle cx="8" cy="7" r="6" fill="#82ba72" stroke="#5d8e50"/><circle cx="8" cy="34" r="6" fill="#6ab4de" stroke="#4384aa"/><circle cx="34" cy="21" r="6" fill="#f08088" stroke="#c95a63"/></svg></button>
      <button class="vb" aria-label="模拟"><svg viewBox="0 0 40 40"><path d="M20 5 4 34h31z" fill="none" stroke="#b2b4b5" stroke-width="8" stroke-linejoin="round"/><path d="M20 5 5 32" stroke="#d2d3d4" stroke-width="5" stroke-linecap="round"/><circle cx="33" cy="34" r="6" fill="#c8caca"/><path d="m31 28 6 3-6 5z" fill="#ededed"/></svg></button>
      <button class="vb" aria-label="暂停"><svg viewBox="0 0 40 40"><path d="M7 7h9v27H7zM25 7h10v27H25z" fill="#8e9091" stroke="#bfc1c2"/></svg></button>
      <button class="vb" aria-label="结果"><svg viewBox="0 0 40 40"><path d="M0 10h40v27H9c8-8 10-17-9-20z" fill="#c3c5c6"/><path d="M5 12h30l-5 20H18c4-8 2-14-8-18z" fill="#a9abac" opacity="0.600"/></svg></button>
    </div>

    <svg class="model" viewBox="0 0 620 330">
      <defs>
        <linearGradient id="wall"><stop offset="0" stop-color="#cfcfcf"/><stop offset="0.060" stop-color="#dedede"/><stop offset="0.300" stop-color="#e9e9e9"/><stop offset="0.500" stop-color="#d9d9d9"/><stop offset="0.700" stop-color="#b8b8b8"/><stop offset="0.850" stop-color="#949494"/><stop offset="0.950" stop-color="#808080"/><stop offset="1" stop-color="#868686"/></linearGradient>
        <linearGradient id="ringwall"><stop offset="0" stop-color="#d6d6d6"/><stop offset="0.350" stop-color="#ececec"/><stop offset="0.550" stop-color="#dcdcdc"/><stop offset="0.800" stop-color="#a6a6a6"/><stop offset="1" stop-color="#868686"/></linearGradient>
        <linearGradient id="chamfer"><stop offset="0" stop-color="#f2f2f2"/><stop offset="0.200" stop-color="#ffffff"/><stop offset="0.500" stop-color="#fafafa"/><stop offset="0.750" stop-color="#dedede"/><stop offset="0.900" stop-color="#c0c0c0"/><stop offset="1" stop-color="#949494"/></linearGradient>
        <linearGradient id="bowl"><stop offset="0" stop-color="#a2a2a2"/><stop offset="0.120" stop-color="#b8b8b8"/><stop offset="0.300" stop-color="#e2e2e2"/><stop offset="0.550" stop-color="#fbfbfb"/><stop offset="1" stop-color="#ffffff"/></linearGradient>
        <linearGradient id="cone"><stop offset="0" stop-color="#e4e4e4"/><stop offset="0.250" stop-color="#ffffff"/><stop offset="0.600" stop-color="#f4f4f4"/><stop offset="0.850" stop-color="#b4b4b4"/><stop offset="1" stop-color="#b0b0b0"/></linearGradient>
        <linearGradient id="bore"><stop offset="0" stop-color="#8e8e8e"/><stop offset="1" stop-color="#f6f6f6"/></linearGradient>
        <clipPath id="rim"><ellipse cx="305" cy="89" rx="184" ry="65" transform="rotate(-1.500 305 89)"/></clipPath>
      </defs>
      <g stroke="#333" stroke-width="1">
        <ellipse cx="308" cy="211" rx="294" ry="104" fill="url(#wall)" transform="rotate(-1.500 308 211)"/>
        <path d="M12 126 14 218 603 204 600 112z" fill="url(#wall)" stroke="none"/>
        <ellipse cx="306" cy="119" rx="294" ry="104" fill="#dedede" transform="rotate(-1.500 306 119)"/>
        <path d="M88 119C88 165 180 197 295 197S523 160 523 111V98L89 107z" fill="url(#ringwall)" stroke="none"/>
        <path d="M88 119C88 165 180 197 295 197S523 160 523 111" fill="none"/>
        <ellipse cx="305" cy="102" rx="216" ry="76" fill="url(#chamfer)" transform="rotate(-1.500 305 102)"/>
        <ellipse cx="305" cy="90" rx="204" ry="73" fill="#dcdcdc" transform="rotate(-1.500 305 90)"/>
        <ellipse cx="305" cy="89" rx="184" ry="65" fill="url(#bowl)" transform="rotate(-1.500 305 89)"/>
        <g clip-path="url(#rim)">
          <ellipse cx="306" cy="109" rx="147" ry="53" fill="#dcdcdc" transform="rotate(-1.500 306 109)"/>
          <ellipse cx="306" cy="108" rx="123" ry="44" fill="url(#cone)" transform="rotate(-1.500 306 108)"/>
        </g>
        <ellipse cx="306" cy="89" rx="86" ry="31" fill="#dedede" transform="rotate(-1.500 306 89)"/>
        <ellipse cx="305" cy="89" rx="25" ry="9" fill="url(#bore)"/>
        <ellipse cx="403" cy="72" rx="14" ry="6" fill="#dcdcdc"/>
      </g>
      <path d="m306 165 23 8" stroke="#e6394a" stroke-width="1.500"/><circle cx="329" cy="173" r="3" fill="#e6394a"/>
      <path d="m310 161 13-22" stroke="#5fdc62" stroke-width="1.500"/><circle cx="323" cy="139" r="3" fill="#43dc50"/>
      <path d="m306 165-14-17" stroke="#7ee3dc" stroke-width="1.500"/><circle cx="291" cy="148" r="4" fill="#3fdcd6"/>
    </svg>

    <svg class="cursor" viewBox="0 0 16 25"><path d="M1 1v19l4-4 4 8 4-2-4-7h6z" fill="#fff" stroke="#4a5563" stroke-width="1.200"/></svg>
  </section>
</main>
</body>
</html>
```
FILE: styles.css
```css
* {
  box-sizing: border-box;
  margin: 0;
  padding: 0;
}

body {
  display: flex;
  flex-direction: column;
  min-height: 100vh;
  border-left: 1px solid #000;
  font-family: "Open Sans", "Noto Sans CJK SC", sans-serif;
  font-size: 15px;
  line-height: 20px;
  color: #4a4d4f;
  background-color: #f7f8fb;
  overflow-x: hidden;
}

button {
  font: inherit;
  color: inherit;
  border: none;
  background: none;
  cursor: pointer;
}

svg {
  display: block;
  flex: none;
}

.defs {
  position: absolute;
}

.caret {
  flex: none;
  border: 5px solid transparent;
  border-top-color: #5b5f61;
  border-bottom: none;
}

/* Title bar */

.titlebar {
  display: grid;
  grid-template-columns: 4fr 3fr;
  align-items: center;
  height: 33px;
  background-color: #dadfdf;
}

.quick {
  display: flex;
  align-items: center;
  height: 31px;
  padding-left: 4px;
}

.app {
  width: 20px;
  height: 20px;
}

.brand {
  width: 77px;
  padding-left: 6px;
  font-family: Inter, sans-serif;
  font-size: 22px;
  color: #55595b;
}

.brand sup {
  font-size: 8px;
  vertical-align: 8px;
}

.qbtn {
  display: flex;
  align-items: center;
  justify-content: center;
  width: 30px;
  height: 30px;
}

.qbtn svg {
  width: 20px;
  height: 20px;
}

.qbtn.undo {
  gap: 8px;
  width: 49px;
}

.qbtn.last {
  width: 32px;
}

.faint {
  opacity: 0.5;
}

.more {
  display: flex;
  align-items: center;
  justify-content: center;
  width: 32px;
  height: 31px;
  border-left: 1px solid #c3c8c8;
}

.more svg {
  width: 10px;
  height: 10px;
}

.doc-title {
  font-size: 17px;
  font-weight: normal;
  color: #bfc5c5;
}

/* Ribbon tabs */

.tabs {
  display: flex;
  height: 37px;
  background-color: #404749;
}

.tab {
  padding: 0 29px 0 30px;
  font-size: 17px;
  line-height: 37px;
  color: #eef0f0;
  text-decoration: none;
  white-space: nowrap;
}

.tab.file {
  padding: 0 25px 0 18px;
  color: #fff;
  background-color: #57b53a;
}

.tab.active {
  padding: 0 30px 0 28px;
  color: #4c8a2c;
  background-color: #f7f8fb;
}

/* Ribbon */

.ribbon {
  display: flex;
  height: 144px;
  border-bottom: 1px solid #bfcfdb;
  background-color: #f7f8fb;
}

.group {
  display: flex;
  flex-direction: column;
  border-right: 1px solid #cdd0d3;
}

.tools {
  display: grid;
  height: 108px;
}

.g-ops { width: 158px; }
.g-ops .tools { grid-template-columns: 73px auto; }
.g-data { width: 136px; }
.g-data .tools { padding-left: 8px; }
.g-body { width: 106px; }
.g-body .tools { padding-left: 8px; }
.g-datum { width: 192px; }
.g-datum .tools { grid-template-columns: 60px 76px 50px; }
.g-shape { width: 157px; }
.g-shape .tools { grid-template-columns: 60px auto; }
.g-eng { width: 192px; }
.g-eng .tools { grid-template-columns: 98px auto; padding-left: 10px; }
.g-edit { width: 387px; }
.g-edit .tools { grid-template-columns: 60px 67px 66px 81px auto; }
.g-surf { width: 161px; }
.g-surf .tools { grid-template-columns: 80px auto; }
.g-intent { width: 89px; }

.col {
  display: grid;
  grid-template-rows: repeat(3, 36px);
}

.cmd {
  display: flex;
  align-items: center;
  gap: 5px;
  white-space: nowrap;
}

.cmd svg {
  width: 20px;
  height: 20px;
}

.cmd .caret {
  margin-left: 5px;
}

.cmd:disabled {
  color: #b4b7b9;
}

.cmd:disabled .caret {
  border-top-color: #b4b7b9;
}

.big {
  display: flex;
  flex-direction: column;
  align-items: center;
  padding-top: 8px;
  white-space: nowrap;
}

.g-ops .big {
  padding-right: 8px;
}

.big svg {
  width: 40px;
  height: 40px;
}

.big span {
  margin: 12px 0 9px;
}

.group-label {
  display: flex;
  align-items: center;
  justify-content: center;
  gap: 5px;
  height: 35px;
  white-space: nowrap;
}

/* Work area */

.work {
  display: flex;
  flex: 1;
}

.panel {
  width: 336px;
  border-right: 4px solid #dde1e4;
  background-color: #f7f8fa;
}

.panel-tabs {
  display: flex;
  height: 33px;
  margin-right: -4px;
  background-color: #dadede;
}

.ptab {
  display: flex;
  align-items: center;
  justify-content: center;
  width: 41px;
}

.ptab.on {
  width: 33px;
  background-color: #f7f8fa;
}

.ptab svg,
.pt svg,
.search > svg,
.tree svg {
  width: 20px;
  height: 20px;
}

.panel-tools {
  display: flex;
  align-items: center;
  height: 41px;
  padding-left: 2px;
}

.pt {
  display: flex;
  align-items: center;
  justify-content: center;
  width: 30px;
  height: 30px;
}

.pt.pressed {
  margin-left: 2px;
  border: 1px solid #a9acac;
  background-color: #dcdede;
}

.pt.chev {
  width: 24px;
  margin-right: 3px;
  padding-bottom: 4px;
  font-size: 20px;
}

.grip {
  height: 20px;
  margin: 0 21px 0 2px;
  border-left: 3px dotted #b0b3b4;
}

.bar {
  height: 30px;
  margin: 0 6px;
  border-left: 1px solid #c6c8c9;
}

.search {
  display: flex;
  align-items: center;
  height: 37px;
  padding-left: 8px;
}

.search-box {
  display: flex;
  align-items: center;
  width: 237px;
  height: 37px;
  margin-left: 6px;
  border: 1px solid #b5b5ad;
  background-color: #fff;
}

.search-box input {
  flex: 1;
  min-width: 0;
  height: 35px;
  padding: 0 8px;
  border: none;
  outline: none;
  font: inherit;
  background: none;
}

.clear {
  width: 24px;
}

.clear svg {
  width: 10px;
  height: 10px;
  margin: 0 auto;
}

.opt {
  display: flex;
  justify-content: center;
  width: 26px;
}

.opt svg {
  width: 14px;
  height: 14px;
}

.tree {
  padding-top: 5px;
  list-style: none;
}

.tree li {
  display: flex;
  align-items: center;
  gap: 6px;
  height: 28px;
  padding-left: 33px;
}

.tree .root {
  gap: 0;
  padding-left: 7px;
}

.tree .warn {
  width: 10px;
  height: 10px;
  margin: 0 2px 8px 7px;
}

.tree .branch {
  padding-left: 15px;
}

.twist {
  margin-right: 4px;
  border: 5px solid transparent;
  border-right: none;
  border-left: 8px solid #7d8082;
}

.insert-line {
  width: 319px;
  height: 9px;
  margin: 6px 0 0 7px;
  border: solid #6fc35c;
  border-width: 0 2px;
  background: linear-gradient(#83cf72, #83cf72) center / 100% 3px no-repeat;
}

/* Graphics window */

.canvas {
  position: relative;
  flex: 1;
  background: linear-gradient(#c2dbee, #a9c3dd 34%, #87a3c7 70%, #6d8db8);
}

.viewbar {
  position: absolute;
  top: 9px;
  right: 96px;
  display: flex;
  gap: 4px;
  padding: 4px 3px;
  border: 1px solid #a3aebb;
  background-color: #f6f8fb;
}

.vb {
  position: relative;
  display: flex;
  align-items: center;
  justify-content: center;
  width: 50px;
  height: 50px;
}

.vb svg {
  width: 40px;
  height: 40px;
}

.vb.pressed {
  border: 1px solid #b4babe;
  background-color: #d9dee1;
}

.corner {
  position: absolute;
  right: 0;
  bottom: 2px;
  border: 4px solid #44484c;
  border-top-color: transparent;
  border-left-color: transparent;
}

/* The part sits free on the canvas */
.model {
  position: absolute;
  top: 276px;
  left: 203px;
  width: 620px;
  height: 330px;
}

.cursor {
  position: absolute;
  top: 186px;
  left: 300px;
  width: 16px;
  height: 25px;
}
```
